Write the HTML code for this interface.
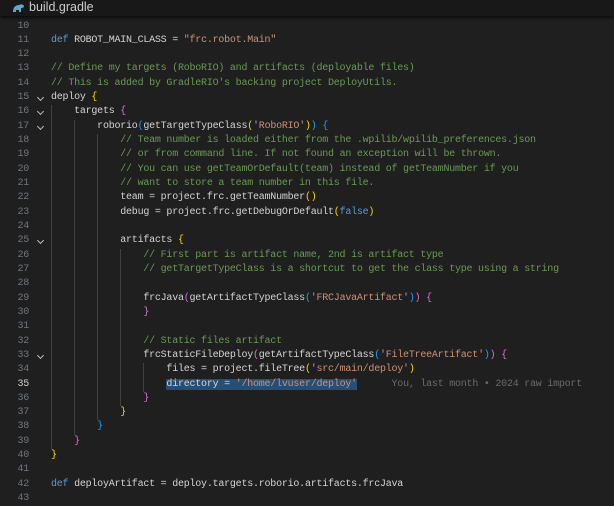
<!DOCTYPE html><html><head><style>
body{margin:0;width:614px;height:500px;background:#1f1f1f;overflow:hidden;font-family:"Liberation Mono",monospace;font-size:10px;letter-spacing:-0.23px;color:#d4d4d4;position:relative}
.tab{position:absolute;left:0;top:0;width:614px;height:16px;background:#181818;box-shadow:0 2px 3px #000a;font-family:"Liberation Sans",sans-serif;font-size:12.5px;letter-spacing:0;color:#ccc;z-index:2}
.tab span{position:absolute;left:29px;top:0px}
.ln{position:absolute;left:0;width:29px;text-align:right;color:#6e7681}
.l{position:absolute;left:51px;white-space:pre}
.f{position:absolute;left:38px;width:4px;height:4px;border-right:1px solid #bbb;border-bottom:1px solid #bbb;transform:rotate(45deg)}
.g{position:absolute;width:1px;background:#404040}
.k{color:#569cd6}.s{color:#ce9178}.c{color:#6a9955}
.y{color:#ffd700}.p{color:#da70d6}.b{color:#179fff}
.sel{background:#264f78}
</style></head><body>
<div class="tab"><svg style="position:absolute;left:12px;top:3px" width="13" height="10" viewBox="0 0 13 10"><path d="M1 9 C1 4 4 2 7 2 C9 1 11 1 12 3 C12 5 10 5 9 5 L9 9 L7 9 L7 7 L4 7 L4 9 Z" fill="#5fa8d3"/></svg><span>build.gradle</span></div>
<div id="c"></div>
<script>
const L=[
[10,''],
[11,'<span class="k">def</span> ROBOT_MAIN_CLASS = <span class="s">"frc.robot.Main"</span>'],
[12,''],
[13,'<span class="c">// Define my targets (RoboRIO) and artifacts (deployable files)</span>'],
[14,'<span class="c">// This is added by GradleRIO\'s backing project DeployUtils.</span>'],
[15,'deploy <span class="y">{</span>',1],
[16,'    targets <span class="p">{</span>',1],
[17,'        roborio<span class="b">(</span>getTargetTypeClass<span class="y">(</span><span class="s">\'RoboRIO\'</span><span class="y">)</span><span class="b">)</span> <span class="b">{</span>',1],
[18,'            <span class="c">// Team number is loaded either from the .wpilib/wpilib_preferences.json</span>'],
[19,'            <span class="c">// or from command line. If not found an exception will be thrown.</span>'],
[20,'            <span class="c">// You can use getTeamOrDefault(team) instead of getTeamNumber if you</span>'],
[21,'            <span class="c">// want to store a team number in this file.</span>'],
[22,'            team = project.frc.getTeamNumber<span class="y">()</span>'],
[23,'            debug = project.frc.getDebugOrDefault<span class="y">(</span><span class="k">false</span><span class="y">)</span>'],
[24,''],
[25,'            artifacts <span class="y">{</span>',1],
[26,'                <span class="c">// First part is artifact name, 2nd is artifact type</span>'],
[27,'                <span class="c">// getTargetTypeClass is a shortcut to get the class type using a string</span>'],
[28,''],
[29,'                frcJava<span class="p">(</span>getArtifactTypeClass<span class="b">(</span><span class="s">\'FRCJavaArtifact\'</span><span class="b">)</span><span class="p">)</span> <span class="p">{</span>'],
[30,'                <span class="p">}</span>'],
[31,''],
[32,'                <span class="c">// Static files artifact</span>'],
[33,'                frcStaticFileDeploy<span class="p">(</span>getArtifactTypeClass<span class="b">(</span><span class="s">\'FileTreeArtifact\'</span><span class="b">)</span><span class="p">)</span> <span class="p">{</span>',1],
[34,'                    files = project.fileTree<span class="y">(</span><span class="s">\'src/main/deploy\'</span><span class="y">)</span>'],
[35,'                    <span class="sel">directory = <span class="s">\'/home/lvuser/deploy\'</span></span>      <span style="color:#6b6b6b">You, last month • 2024 raw import</span>'],
[36,'                <span class="p">}</span>'],
[37,'            <span class="y">}</span>'],
[38,'        <span class="b">}</span>'],
[39,'    <span class="p">}</span>'],
[40,'<span class="y">}</span>'],
[41,''],
[42,'<span class="k">def</span> deployArtifact = deploy.targets.roborio.artifacts.frcJava'],
[43,'']];
let h='',lh=14.32,t0=19.5;
L.forEach((r,i)=>{const t=t0+i*lh;
h+=`<div class="ln" style="top:${t}px;line-height:${lh}px;${r[0]==35?'color:#ccc':''}">${r[0]}</div>`;
h+=`<div class="l" style="top:${t}px;line-height:${lh}px">${r[1]}</div>`;
if(r[2])h+=`<div class="f" style="top:${t+4}px"></div>`;});
const g=[[51,16,39],[74,17,38],[97,18,37],[120,26,36],[143,34,35]];
g.forEach(a=>{const t=t0+(a[1]-10)*lh;h+=`<div class="g" style="left:${a[0]}px;top:${t}px;height:${(a[2]-a[1]+1)*lh}px"></div>`});
document.getElementById('c').innerHTML=h;
</script>
</body></html>
